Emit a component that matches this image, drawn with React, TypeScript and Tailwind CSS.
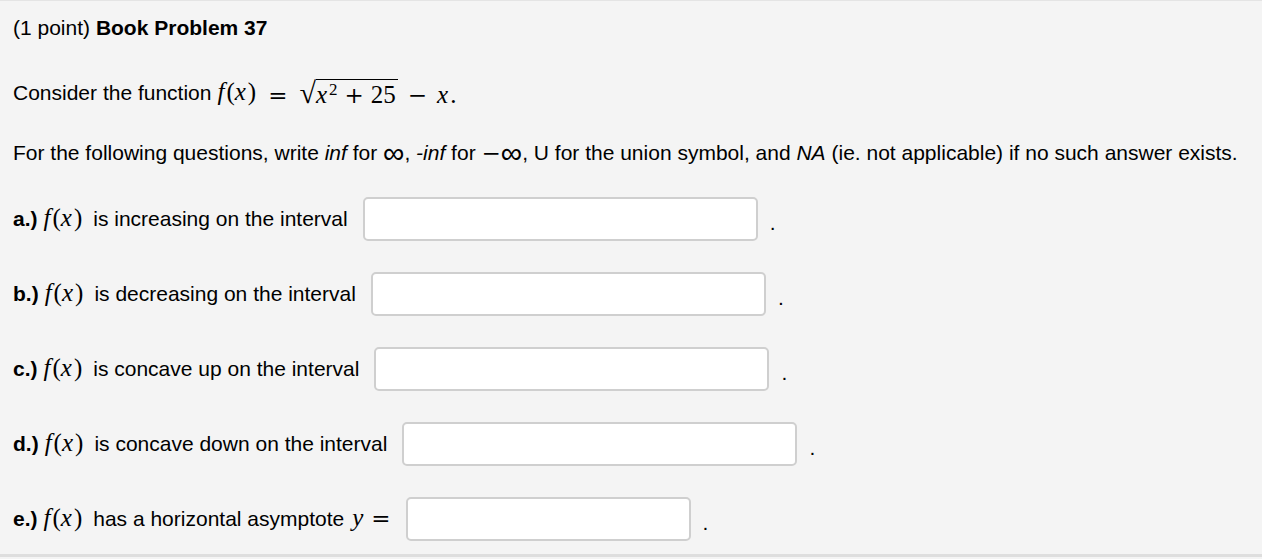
import React from 'react';

const M = ({ children }: { children: React.ReactNode }) => (
  <span className="font-['Liberation_Serif',serif] text-[25px] leading-none">{children}</span>
);

const I = ({ children }: { children: React.ReactNode }) => <i className="pr-[2px]">{children}</i>;

const Op = ({ children, cls }: { children: React.ReactNode; cls: string }) => (
  <span className={`font-['DejaVu_Serif',serif] text-[23px] ${cls}`}>{children}</span>
);

const Fx = () => (
  <M>
    <I>f</I>(<I>x</I>)
  </M>
);

const Inf = () => <span className="text-[30px] leading-none">∞</span>;

const rows = [
  { label: 'a.)', text: 'is increasing on the interval', w: 'w-[395px]' },
  { label: 'b.)', text: 'is decreasing on the interval', w: 'w-[395px]' },
  { label: 'c.)', text: 'is concave up on the interval', w: 'w-[395px]' },
  { label: 'd.)', text: 'is concave down on the interval', w: 'w-[395px]' },
];

function Row({ label, text, w, math }: { label: string; text: string; w: string; math?: React.ReactNode }) {
  return (
    <div className="flex items-center h-[44px]">
      <b>{label}</b>
      <span className="ml-[6px]">
        <Fx />
      </span>
      <span className="ml-[11px]">{text}</span>
      {math}
      <div className={`ml-[15px] h-[44px] ${w} rounded-[5px] border-2 border-[#cfcfcf] bg-white`} />
      <span className="ml-[12px] mt-[8px]">.</span>
    </div>
  );
}

export default function App() {
  return (
    <div className="w-[1262px] h-[559px] bg-[#f4f4f4] border-t border-[#e4e4e4] font-['Liberation_Sans',Arial,sans-serif] text-[21px] text-black">
      <div className="h-[556px] border-b-[3px] border-[#dedede] pl-[13px] pt-[14px]">
        <div className="h-[26px] leading-[26px]">
          (1 point) <b>Book Problem 37</b>
        </div>
        <div className="mt-[36px] h-[32px] flex items-center">
          <span>Consider the function</span>
          <span className="ml-[6px]">
            <Fx />
          </span>
          <M>
            <Op cls="mx-[12px]">=</Op>
            <span className="text-[30px]">√</span>
            <span className="border-t-[1.5px] border-black pt-[1px] pr-[2px]">
              <I>x</I>
              <sup className="text-[17px]">2</sup>
              <Op cls="mx-[7px]">+</Op>25
            </span>
            <Op cls="mx-[10px]">−</Op>
            <I>x</I>.
          </M>
        </div>
        <div className="mt-[28px] h-[32px] flex items-center whitespace-pre">
          For the following questions, write <i>inf</i> for <Inf />, <i>-inf</i> for <Op cls="">−</Op><Inf />, U for the union symbol, and <i>NA</i> (ie. not applicable) if no such answer exists.
        </div>
        <div className="mt-[28px] flex flex-col gap-[31px]">
          {rows.map((r) => (
            <Row key={r.label} {...r} />
          ))}
          <Row
            label="e.)"
            text="has a horizontal asymptote"
            w="w-[285px]"
            math={
              <span className="ml-[8px]">
                <M>
                  <I>y</I>
                  <Op cls="ml-[6px]">=</Op>
                </M>
              </span>
            }
          />
        </div>
      </div>
    </div>
  );
}
